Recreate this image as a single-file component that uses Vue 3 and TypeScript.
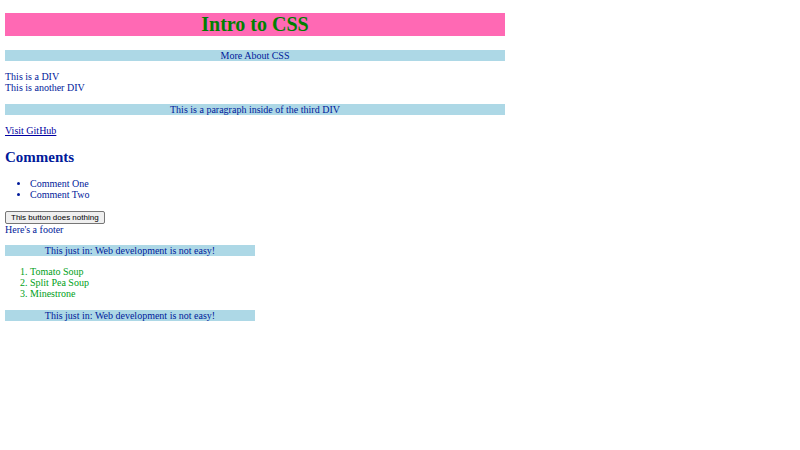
<script setup lang="ts">
const comments: string[] = ['Comment One', 'Comment Two']
const soups: string[] = ['Tomato Soup', 'Split Pea Soup', 'Minestrone']
const news = 'This just in: Web development is not easy!'
</script>

<template>
  <main class="page">
    <h1 class="title">Intro to CSS</h1>
    <p class="banner">More About CSS</p>
    <div class="group">
      <div>This is a DIV</div>
      <div>This is another DIV</div>
    </div>
    <div>
      <p class="banner">This is a paragraph inside of the third DIV</p>
    </div>
    <a class="link" href="https://github.com">Visit GitHub</a>
    <h2 class="heading">Comments</h2>
    <ul class="list">
      <li v-for="comment in comments" :key="comment">{{ comment }}</li>
    </ul>
    <button class="button" type="button">This button does nothing</button>
    <footer>Here's a footer</footer>
    <p class="banner half">{{ news }}</p>
    <ol class="list soups">
      <li v-for="soup in soups" :key="soup">{{ soup }}</li>
    </ol>
    <p class="banner half">{{ news }}</p>
  </main>
</template>

<style scoped>
.page {
  display: flow-root;
  max-width: 500px;
  padding: 0 5px;
  color: #001a9a;
  font-family: "Liberation Serif", "Times New Roman", serif;
  font-size: 10px;
  line-height: 11px;
}
.title {
  margin: 13px 0 14px;
  background: hotpink;
  color: green;
  font-size: 20px;
  line-height: 23px;
  text-align: center;
}
.banner {
  margin: 10px 0;
  background: lightblue;
  text-align: center;
}
.half {
  width: 50%;
}
.group {
  margin-bottom: 11px;
}
.link {
  color: #0000a0;
}
.heading {
  margin: 12px 0;
  font-size: 15px;
  line-height: 18px;
}
.list {
  margin: 10px 0 11px;
  padding-left: 25px;
}
.soups {
  color: #00a020;
}
.button {
  display: block;
  padding: 1px 5px;
  border: 1px solid #767676;
  border-radius: 2px;
  background: #efefef;
  color: #000;
  font-family: "Liberation Sans", Arial, sans-serif;
  font-size: 8px;
  line-height: 9px;
}
</style>
